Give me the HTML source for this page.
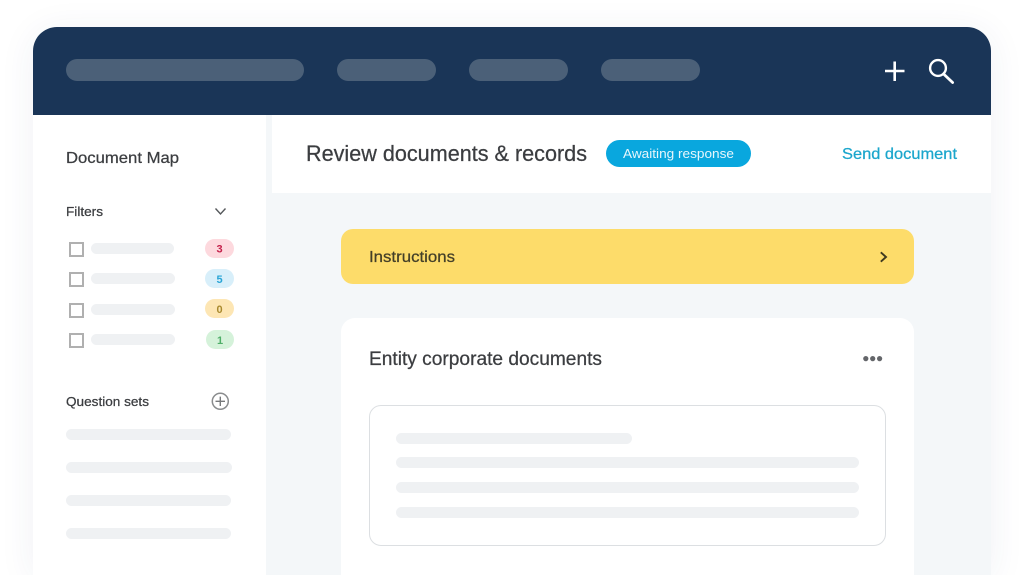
<!DOCTYPE html>
<html lang="en">
<head>
<meta charset="utf-8">
<title>Document Map</title>
<style>
html,body{margin:0;padding:0;background:#fff;width:1024px;height:575px;overflow:hidden;}
body{font-family:"Liberation Sans",sans-serif;}
#w{position:relative;width:1024px;height:575px;overflow:hidden;background:#fff;}
.d{position:absolute;}
.frame{left:33px;top:27px;width:958px;height:548px;border-radius:24px 24px 0 0;background:#f4f7f9;box-shadow:0 4px 36px rgba(40,60,110,.07);}
.nav{left:33px;top:27px;width:958px;height:88px;background:#1a3557;border-radius:24px 24px 0 0;}
.side{left:33px;top:115px;width:233px;height:460px;background:#fff;}
.head{left:272px;top:115px;width:719px;height:78px;background:#fff;}
.p{background:#4b6078;height:22px;top:59px;border-radius:11px;}
.l{background:#eff1f3;border-radius:6px;}
.cb{left:69px;width:10.5px;height:10.5px;border:2px solid #b0b0b0;}
.bd{left:205px;width:29px;height:19px;border-radius:10px;}
.yellow{left:341px;top:229px;width:573px;height:55px;background:#fddc6a;border-radius:12px;}
.card{left:341px;top:318px;width:573px;height:257px;background:#fff;border-radius:14px 14px 0 0;}
.inner{left:369px;top:405px;width:515px;height:139px;border:1.5px solid #dcdfe2;border-radius:12px;background:#fff;}
.pill{left:606px;top:140px;width:145px;height:27px;background:#09a7de;border-radius:14px;}
svg{position:absolute;left:0;top:0;}
</style>
</head>
<body>
<div id="w">
<div class="d frame"></div>
<div class="d nav"></div>
<div class="d side"></div>
<div class="d head"></div>

<div class="d p" style="left:66px;width:238px"></div>
<div class="d p" style="left:337px;width:99px"></div>
<div class="d p" style="left:469px;width:99px"></div>
<div class="d p" style="left:601px;width:99px"></div>

<div class="d cb" style="top:242px"></div>
<div class="d cb" style="top:272px"></div>
<div class="d cb" style="top:303px"></div>
<div class="d cb" style="top:333px"></div>
<div class="d l" style="left:91px;top:243px;width:83px;height:11px"></div>
<div class="d l" style="left:91px;top:273px;width:84px;height:11px"></div>
<div class="d l" style="left:91px;top:304px;width:84px;height:11px"></div>
<div class="d l" style="left:91px;top:334px;width:84px;height:11px"></div>
<div class="d bd" style="top:239px;background:#fdd9de"></div>
<div class="d bd" style="top:269px;background:#d8effa"></div>
<div class="d bd" style="top:299px;background:#fde6b4"></div>
<div class="d bd" style="top:330px;left:206px;width:28px;background:#d5f2da"></div>

<div class="d l" style="left:66px;top:429px;width:165px;height:11px"></div>
<div class="d l" style="left:66px;top:462px;width:166px;height:11px"></div>
<div class="d l" style="left:66px;top:495px;width:165px;height:11px"></div>
<div class="d l" style="left:66px;top:528px;width:165px;height:11px"></div>

<div class="d pill"></div>
<div class="d yellow"></div>
<div class="d card"></div>
<div class="d inner"></div>
<div class="d l" style="left:396px;top:433px;width:236px;height:11px"></div>
<div class="d l" style="left:396px;top:457px;width:463px;height:11px"></div>
<div class="d l" style="left:396px;top:482px;width:463px;height:11px"></div>
<div class="d l" style="left:396px;top:507px;width:463px;height:11px"></div>

<svg width="1024" height="575" viewBox="0 0 1024 575" font-family="'Liberation Sans',sans-serif">
  <g fill="#3b3d40" stroke="#3b3d40" stroke-width=".25">
    <text x="66" y="163" font-size="16" textLength="113" lengthAdjust="spacingAndGlyphs">Document Map</text>
    <text x="66" y="216" font-size="13" textLength="37" lengthAdjust="spacingAndGlyphs">Filters</text>
    <text x="66" y="406" font-size="13" textLength="83" lengthAdjust="spacingAndGlyphs">Question sets</text>
    <text x="306" y="161" font-size="22" textLength="281" lengthAdjust="spacingAndGlyphs">Review documents &amp; records</text>
    <text x="369" y="365" font-size="19" textLength="233" lengthAdjust="spacingAndGlyphs">Entity corporate documents</text>
  </g>
  <text x="623" y="158" font-size="13" fill="#e6f6fc" textLength="111" lengthAdjust="spacingAndGlyphs">Awaiting response</text>
  <text x="842" y="159" font-size="16" fill="#1ba6cc" stroke="#1ba6cc" stroke-width=".25" textLength="115" lengthAdjust="spacingAndGlyphs">Send document</text>
  <text x="369" y="262" font-size="16" fill="#433f28" stroke="#433f28" stroke-width=".25" textLength="86" lengthAdjust="spacingAndGlyphs">Instructions</text>

  <g font-size="11" font-weight="bold" text-anchor="middle">
    <text x="219.5" y="252.5" fill="#c4204a">3</text>
    <text x="219.5" y="283" fill="#2aa5d6">5</text>
    <text x="219.5" y="313" fill="#a98a2e">0</text>
    <text x="220" y="344" fill="#4fae68">1</text>
  </g>

  <!-- nav plus -->
  <path d="M885 71H904.5M894.7 61.5V81" stroke="#fff" stroke-width="2.6" fill="none"/>
  <!-- search -->
  <circle cx="938" cy="68" r="7.9" stroke="#fff" stroke-width="2.4" fill="none"/>
  <path d="M943.6 74L952.6 82.5" stroke="#fff" stroke-width="2.8" stroke-linecap="round" fill="none"/>
  <!-- filters chevron -->
  <path d="M215.5 208.5L220.5 214L225.5 208.5" stroke="#55585b" stroke-width="1.4" fill="none"/>
  <!-- add circle -->
  <circle cx="220.3" cy="401.3" r="8" stroke="#8a8c8e" stroke-width="1.5" fill="none"/>
  <path d="M215.5 401.3H225M220.3 396.6V406" stroke="#77797b" stroke-width="1.4" fill="none"/>
  <!-- instructions chevron -->
  <path d="M880.8 252.3L886 257L880.8 261.7" stroke="#3f3a1f" stroke-width="1.9" fill="none"/>
  <!-- dots -->
  <g fill="#64666a">
    <circle cx="865.8" cy="358.6" r="2.6"/>
    <circle cx="872.7" cy="358.6" r="2.6"/>
    <circle cx="879.6" cy="358.6" r="2.6"/>
  </g>
</svg>
</div>
</body>
</html>
